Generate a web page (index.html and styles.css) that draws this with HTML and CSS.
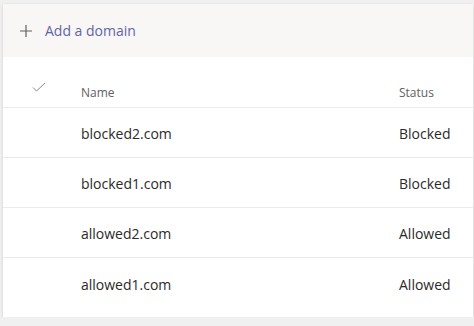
FILE: index.html
```html
<!DOCTYPE html>
<html lang="en">
<head>
    <meta charset="UTF-8">
    <title>Domains</title>
    <link rel="stylesheet" href="styles.css">
</head>
<body>
    <div class="card">
        <div class="toolbar">
            <button class="add-btn">
                <svg class="add-icon" width="14" height="14" viewBox="0 0 14 14">
                    <path d="M7 1v12M1 7h12" stroke="#616161" stroke-width="1.2" fill="none"/>
                </svg>
                <span>Add a domain</span>
            </button>
        </div>

        <div class="table">
            <div class="row header">
                <span class="check">
                    <svg width="14" height="10" viewBox="0 0 14 10">
                        <path d="M1 5.5l3.5 3.5L13 1" stroke="#8a8886" stroke-width="1" fill="none"/>
                    </svg>
                </span>
                <span>Name</span>
                <span>Status</span>
            </div>
            <div class="row">
                <span class="check"></span>
                <span>blocked2.com</span>
                <span>Blocked</span>
            </div>
            <div class="row">
                <span class="check"></span>
                <span>blocked1.com</span>
                <span>Blocked</span>
            </div>
            <div class="row">
                <span class="check"></span>
                <span>allowed2.com</span>
                <span>Allowed</span>
            </div>
            <div class="row last">
                <span class="check"></span>
                <span>allowed1.com</span>
                <span>Allowed</span>
            </div>
        </div>
    </div>
</body>
</html>
```

FILE: styles.css
```css
body {
    margin: 0;
    padding: 4px 1px 0 3px;
    background: #f0f0f0;
    font-family: 'Open Sans', 'Noto Sans', sans-serif;
    color: #2b2a29;
}

.card {
    background: #fff;
    box-shadow: 0 1px 3px rgba(0, 0, 0, 0.14);
    height: 313px;
}

.toolbar {
    background: #f8f7f6;
    height: 53px;
    display: flex;
    align-items: center;
    padding-left: 16px;
}

.add-btn {
    display: flex;
    align-items: center;
    gap: 12px;
    background: none;
    border: none;
    padding: 0;
    font-family: inherit;
    font-size: 14px;
    color: #6264a7;
    cursor: pointer;
}

.add-btn span {
    position: relative;
    top: 0;
}

.table {
    display: flex;
    flex-direction: column;
}

.row {
    display: grid;
    grid-template-columns: 78px 1fr 74px;
    align-items: center;
    height: 50px;
    padding-top: 2px;
    box-sizing: border-box;
    border-bottom: 1px solid #edebe9;
    font-size: 14px;
}

.row.last {
    border-bottom: none;
}

.row.header {
    height: 51px;
    align-items: end;
    padding-bottom: 6px;
    font-size: 12px;
    color: #616161;
}

.check {
    padding-left: 29px;
    display: flex;
    align-items: center;
    height: 20px;
}

.check svg {
    position: relative;
    top: -4px;
}
```
